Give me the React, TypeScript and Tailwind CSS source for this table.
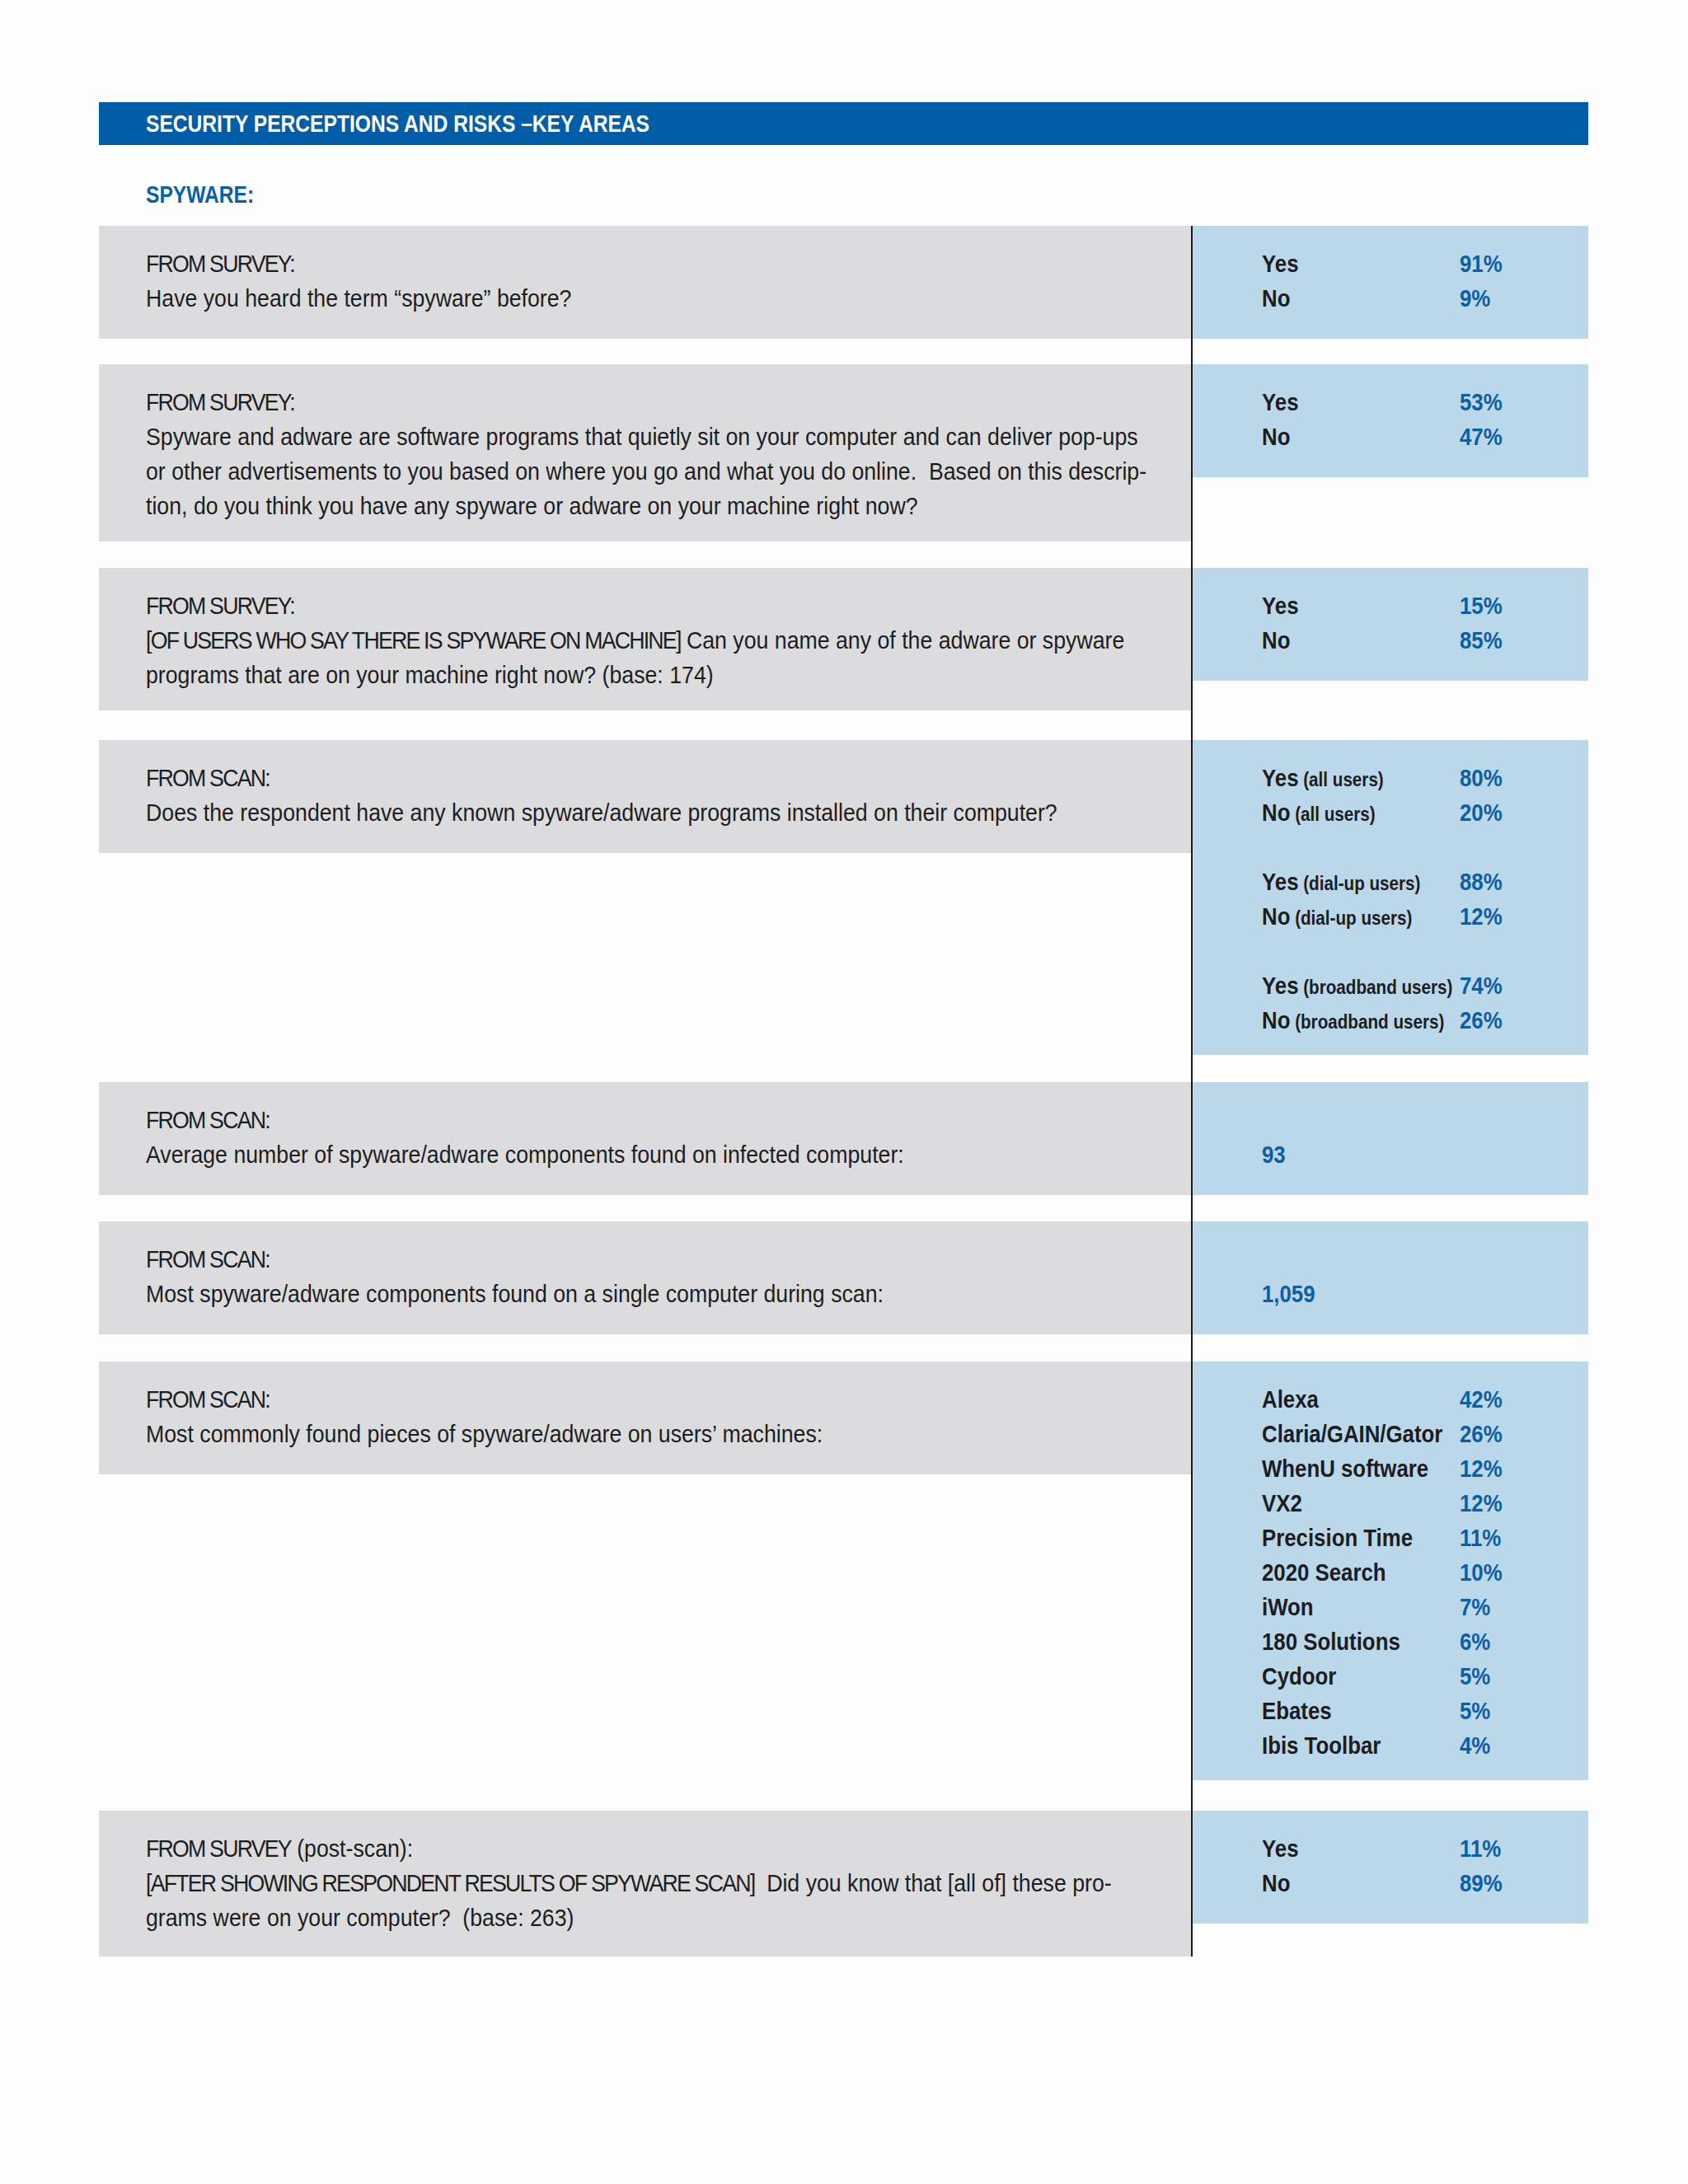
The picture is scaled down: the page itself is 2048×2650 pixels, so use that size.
import React from "react";

type Answer = { label: string; sub?: string; value?: string } | null;

interface RowProps {
  left: string[];
  right: Answer[];
  gap: string;
  minH?: string;
}

const rows: RowProps[] = [
  {
    left: ["FROM SURVEY:", "Have you heard the term \u201cspyware\u201d before?"],
    right: [
      { label: "Yes", value: "91%" },
      { label: "No", value: "9%" },
    ],
    gap: "pb-[31px]",
  },
  {
    left: [
      "FROM SURVEY:",
      "Spyware and adware are software programs that quietly sit on your computer and can deliver pop-ups",
      "or other advertisements to you based on where you go and what you do online.  Based on this descrip-",
      "tion, do you think you have any spyware or adware on your machine right now?",
    ],
    right: [
      { label: "Yes", value: "53%" },
      { label: "No", value: "47%" },
    ],
    gap: "pb-[32px]",
  },
  {
    left: [
      "FROM SURVEY:",
      "[OF USERS WHO SAY THERE IS SPYWARE ON MACHINE] Can you name any of the adware or spyware",
      "programs that are on your machine right now? (base: 174)",
    ],
    right: [
      { label: "Yes", value: "15%" },
      { label: "No", value: "85%" },
    ],
    gap: "pb-[36px]",
  },
  {
    left: [
      "FROM SCAN:",
      "Does the respondent have any known spyware/adware programs installed on their computer?",
    ],
    right: [
      { label: "Yes", sub: "(all users)", value: "80%" },
      { label: "No", sub: "(all users)", value: "20%" },
      null,
      { label: "Yes", sub: "(dial-up users)", value: "88%" },
      { label: "No", sub: "(dial-up users)", value: "12%" },
      null,
      { label: "Yes", sub: "(broadband users)", value: "74%" },
      { label: "No", sub: "(broadband users)", value: "26%" },
    ],
    gap: "pb-[33px]",
  },
  {
    left: [
      "FROM SCAN:",
      "Average number of spyware/adware components found on infected computer:",
    ],
    right: [null, { label: "", value: "93" }],
    gap: "pb-[32px]",
  },
  {
    left: [
      "FROM SCAN:",
      "Most spyware/adware components found on a single computer during scan:",
    ],
    right: [null, { label: "", value: "1,059" }],
    gap: "pb-[33px]",
  },
  {
    left: [
      "FROM SCAN:",
      "Most commonly found pieces of spyware/adware on users\u2019 machines:",
    ],
    right: [
      { label: "Alexa", value: "42%" },
      { label: "Claria/GAIN/Gator", value: "26%" },
      { label: "WhenU software", value: "12%" },
      { label: "VX2", value: "12%" },
      { label: "Precision Time", value: "11%" },
      { label: "2020 Search", value: "10%" },
      { label: "iWon", value: "7%" },
      { label: "180 Solutions", value: "6%" },
      { label: "Cydoor", value: "5%" },
      { label: "Ebates", value: "5%" },
      { label: "Ibis Toolbar", value: "4%" },
    ],
    gap: "pb-[37px]",
  },
  {
    left: [
      "FROM SURVEY (post-scan):",
      "[AFTER SHOWING RESPONDENT RESULTS OF SPYWARE SCAN]  Did you know that [all of] these pro-",
      "grams were on your computer?  (base: 263)",
    ],
    right: [
      { label: "Yes", value: "11%" },
      { label: "No", value: "89%" },
    ],
    gap: "pb-0",
    minH: "min-h-[177px]",
  },
];

// the print font is a condensed grotesk; Liberation Sans squeezed sideways stands in for it
function Narrow({ children, bold }: { children: React.ReactNode; bold?: boolean }) {
  return (
    <span
      className={`inline-block origin-left whitespace-pre ${
        bold ? "scale-x-[0.86]" : "scale-x-[0.89]"
      }`}
    >
      {children}
    </span>
  );
}

const CAPS = /(\[[A-Z ]+\]|FROM (?:SURVEY|SCAN):?)/g;

function BodyLine({ text }: { text: string }) {
  const parts = text.split(CAPS);
  return (
    <>
      {parts.map((p, i) =>
        i % 2 === 1 ? (
          <span key={i} className="tracking-[-2px]">
            {p}
          </span>
        ) : (
          <React.Fragment key={i}>{p}</React.Fragment>
        )
      )}
    </>
  );
}

function AnswerLine({ a }: { a: Answer }) {
  if (!a) return <div className="h-[42px]" />;
  if (!a.label) {
    return (
      <div className="h-[42px] text-[#0b5fa5]">
        <Narrow bold>{a.value}</Narrow>
      </div>
    );
  }
  return (
    <div className="flex h-[42px]">
      <div className="w-[240px] shrink-0 text-[#1d1d1f]">
        <Narrow bold>
          {a.label}
          {a.sub && <span className="text-[24px]"> {a.sub}</span>}
        </Narrow>
      </div>
      <div className="text-[#0b5fa5]">
        <Narrow bold>{a.value}</Narrow>
      </div>
    </div>
  );
}

function Row({ left, right, gap, minH = "min-h-[137px]" }: RowProps) {
  return (
    <div className="flex">
      <div className={`w-[1325px] ${gap}`}>
        <div className={`${minH} bg-[#dcdcde] pt-[25px] pb-[22px] pl-[57px] text-[#1d1d1f]`}>
          {left.map((line, i) => (
            <div key={i} className="h-[42px]">
              <Narrow>
                <BodyLine text={line} />
              </Narrow>
            </div>
          ))}
        </div>
      </div>
      <div className="w-[2px] bg-[#1a1a1a]" />
      <div className={`w-[480px] ${gap}`}>
        <div className="min-h-[137px] bg-[#bad8ea] pt-[25px] pb-[21px] pl-[84px] font-bold">
          {right.map((a, i) => (
            <AnswerLine key={i} a={a} />
          ))}
        </div>
      </div>
    </div>
  );
}

export default function App() {
  return (
    <div className="min-h-[2650px] bg-[#fdfdfd] pt-[124px] font-['Liberation_Sans',Arial,sans-serif] text-[30px] leading-[42px]">
      <div className="ml-[120px] w-[1807px]">
        {/* title bar */}
        <div className="flex h-[52px] items-center bg-[#005da7] pl-[57px] font-bold text-white">
          <span className="inline-block origin-left scale-x-[0.82] whitespace-pre">
            SECURITY PERCEPTIONS AND RISKS &ndash;KEY AREAS
          </span>
        </div>
        <div className="mt-[39px] mb-[17px] pl-[57px] font-bold text-[#0b5fa5]">
          <span className="inline-block origin-left scale-x-[0.82]">SPYWARE:</span>
        </div>

        <div className="flex flex-col">
          {rows.map((r, i) => (
            <Row key={i} {...r} />
          ))}
        </div>
      </div>
    </div>
  );
}
